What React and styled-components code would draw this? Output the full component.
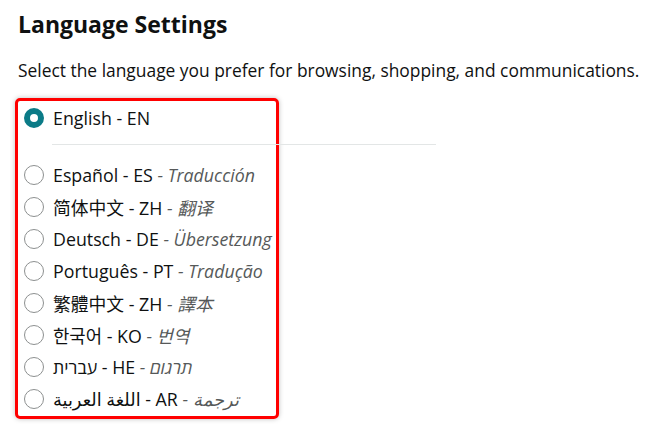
import React, { useState } from "react";
import styled, { createGlobalStyle } from "styled-components";

const languages = [
  { id: "es", name: "Español", code: "ES", tr: "Traducción" },
  { id: "zh-cn", name: "简体中文", code: "ZH", tr: "翻译", cjk: "SC" },
  { id: "de", name: "Deutsch", code: "DE", tr: "Übersetzung" },
  { id: "pt", name: "Português", code: "PT", tr: "Tradução" },
  { id: "zh-tw", name: "繁體中文", code: "ZH", tr: "譯本", cjk: "TC" },
  { id: "ko", name: "한국어", code: "KO", tr: "번역", cjk: "KR" },
  { id: "he", name: "עברית", code: "HE", tr: "תרגום" },
  { id: "ar", name: "اللغة العربية", code: "AR", tr: "ترجمة" },
];

function App() {
  const [selected, setSelected] = useState("en");

  return (
    <Page>
      <GlobalStyle />
      <Title>Language Settings</Title>
      <Intro>
        Select the language you prefer for browsing, shopping, and communications.
      </Intro>
      <Highlight>
        <Row onClick={() => setSelected("en")}>
          <Radio checked={selected === "en"} />
          <Label>English - EN</Label>
        </Row>
        <Divider />
        {languages.map((l) => (
          <Row key={l.id} onClick={() => setSelected(l.id)}>
            <Radio checked={selected === l.id} />
            <Label cjk={l.cjk}>
              {l.name} - {l.code}
              <Translation> - {l.tr}</Translation>
            </Label>
          </Row>
        ))}
      </Highlight>
    </Page>
  );
}

export default App;

const GlobalStyle = createGlobalStyle`
  body {
    margin: 0;
    background: #fff;
    font-family: "Open Sans", "DejaVu Sans", "Noto Sans CJK SC", sans-serif;
    color: #0f1111;
  }
`;

const Page = styled.div`
  width: 650px;
  height: 426px;
  padding: 8px 0 0 18px;
  box-sizing: border-box;
  overflow: hidden;
`;

const Title = styled.h1`
  margin: 0;
  font-size: 23px;
  font-weight: 700;
  line-height: 32px;
`;

const Intro = styled.p`
  margin: 18px 0 0;
  font-size: 17.4px;
  line-height: 24px;
`;

const Highlight = styled.div`
  margin: 16px 0 0 -3px;
  width: 252px;
  height: 314px;
  padding: 1px 0 0 6px;
  border: 3.5px solid #ff0000;
  border-radius: 5px;
  box-shadow: 0 0 5px rgba(0, 0, 0, 0.25);
`;

const Row = styled.label`
  display: flex;
  align-items: center;
  gap: 9px;
  height: 32px;
  cursor: pointer;
`;

const Radio = styled.span`
  width: 20px;
  height: 20px;
  flex: none;
  border-radius: 50%;
  box-sizing: border-box;
  border: ${(p) => (p.checked ? "6px solid #0b7b87" : "1.5px solid #8d9090")};
  background: #fff;
`;

const Label = styled.span`
  font-size: 17.8px;
  white-space: nowrap;
  font-family: ${(p) =>
    p.cjk
      ? `"Open Sans", "Noto Sans CJK ${p.cjk}", sans-serif`
      : `"Open Sans", "DejaVu Sans", sans-serif`};
`;

const Translation = styled.span`
  font-style: italic;
  color: #565959;
`;

const Divider = styled.div`
  width: 384px;
  margin: 10px 0 14px 28px;
  border-top: 1px solid #e3e6e6;
`;
